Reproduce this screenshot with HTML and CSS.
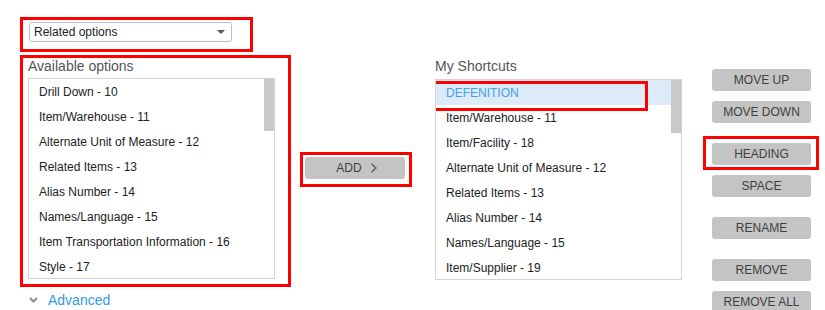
FILE: index.html
```html
<!DOCTYPE html>
<html lang="en">
    <head>
        <meta charset="UTF-8" />
        <title>Shortcuts</title>
        <link rel="stylesheet" href="styles.css">
    </head>
    <body>
        <div class="page">
            <!-- left: options -->
            <div class="col-left">
                <div class="mark mark-select">
                    <div class="select">
                        <span>Related options</span>
                        <span class="caret"></span>
                    </div>
                </div>
                <div class="mark mark-avail">
                    <div class="list-title">Available options</div>
                    <div class="listbox">
                        <ul class="items">
                            <li>Drill Down - 10</li>
                            <li>Item/Warehouse - 11</li>
                            <li>Alternate Unit of Measure - 12</li>
                            <li>Related Items - 13</li>
                            <li>Alias Number - 14</li>
                            <li>Names/Language - 15</li>
                            <li>Item Transportation Information - 16</li>
                            <li>Style - 17</li>
                        </ul>
                        <div class="track"><div class="thumb"></div></div>
                    </div>
                </div>
                <div class="advanced">
                    <svg width="9" height="6" viewBox="0 0 9 6"><path d="M1 1 L4.5 4.5 L8 1" fill="none" stroke="#8e8e8e" stroke-width="2.2"/></svg>
                    <span>Advanced</span>
                </div>
            </div>

            <!-- middle: add -->
            <div class="col-mid">
                <div class="mark mark-add">
                    <button class="btn btn-add">ADD
                        <svg width="8" height="10" viewBox="0 0 8 10"><path d="M1.5 0.8 L6 5 L1.5 9.2" fill="none" stroke="#555" stroke-width="1.3"/></svg>
                    </button>
                </div>
            </div>

            <!-- shortcuts -->
            <div class="col-short">
                <div class="list-title">My Shortcuts</div>
                <div class="listbox listbox-short">
                    <ul class="items">
                        <li class="sel">DEFENITION</li>
                        <li>Item/Warehouse - 11</li>
                        <li>Item/Facility - 18</li>
                        <li>Alternate Unit of Measure - 12</li>
                        <li>Related Items - 13</li>
                        <li>Alias Number - 14</li>
                        <li>Names/Language - 15</li>
                        <li>Item/Supplier - 19</li>
                    </ul>
                    <div class="track"><div class="thumb thumb-short"></div></div>
                    <!-- highlight on selected row -->
                    <div class="mark-row"></div>
                </div>
            </div>

            <!-- actions -->
            <div class="col-actions">
                <button class="btn act">MOVE UP</button>
                <button class="btn act act-down">MOVE DOWN</button>
                <div class="mark mark-heading">
                    <button class="btn act">HEADING</button>
                </div>
                <button class="btn act act-space">SPACE</button>
                <button class="btn act act-rename">RENAME</button>
                <button class="btn act act-remove">REMOVE</button>
                <button class="btn act act-all">REMOVE ALL</button>
            </div>
        </div>
    </body>
</html>
```

FILE: styles.css
```css
body {
    margin: 0;
    background: #fff;
    font-family: "Liberation Sans", Arial, sans-serif;
    color: #333;
    overflow: hidden;
}
.page {
    display: flex;
    align-items: flex-start;
    padding: 17px 0 0 20px;
}
/* red annotation boxes */
.mark {
    border: 3px solid #f00;
    box-sizing: border-box;
}
.col-left {
    width: 271px;
}
.mark-select {
    width: 233px;
    height: 35px;
    padding: 2px 0 0 6px;
}
.select {
    width: 203px;
    height: 20px;
    box-sizing: border-box;
    border: 1px solid #bdbdbd;
    border-radius: 3px;
    display: flex;
    align-items: center;
    justify-content: space-between;
    padding: 0 6px 0 4px;
    font-size: 12px;
    color: #222;
}
.caret {
    width: 0;
    height: 0;
    border-left: 4px solid transparent;
    border-right: 4px solid transparent;
    border-top: 4px solid #555;
}
.mark-avail {
    margin-top: 3px;
    width: 271px;
    height: 232px;
    padding: 0 0 0 5px;
}
.list-title {
    font-size: 14px;
    line-height: 16px;
    color: #555;
}
.listbox {
    position: relative;
    display: flex;
    width: 247px;
    height: 201px;
    box-sizing: border-box;
    border: 1px solid #d3d3d3;
    margin-top: 4px;
    overflow: hidden;
}
.items {
    list-style: none;
    margin: 0;
    padding: 0;
    flex: 1;
}
.items li {
    height: 25px;
    box-sizing: border-box;
    padding: 2px 0 0 10px;
    line-height: 23px;
    font-size: 12px;
    color: #222;
    white-space: nowrap;
}
.items li.sel {
    background: #dcebf7;
    color: #45a0ea;
}
.track {
    width: 10px;
}
.thumb {
    height: 52px;
    background: #c9c9c9;
}
.thumb-short {
    height: 53px;
}
.advanced {
    display: flex;
    align-items: center;
    margin-top: 5px;
    padding-left: 9px;
    font-size: 14px;
    line-height: 16px;
    color: #3399e8;
}
.advanced svg {
    margin-right: 10px;
}
/* buttons */
.btn {
    display: block;
    border: 0;
    border-radius: 3px;
    background: #c4c4c4;
    color: #3f3f3f;
    font-family: "Liberation Sans", Arial, sans-serif;
    font-size: 12px;
    height: 22px;
    padding: 0;
}
.col-mid {
    margin: 135px 0 0 9px;
}
.mark-add {
    width: 112px;
    height: 35px;
    padding: 2px 0 0 2px;
}
.btn-add {
    width: 100px;
    display: flex;
    align-items: center;
    justify-content: center;
    gap: 8px;
    padding-left: 4px;
}
.col-short {
    margin: 41px 0 0 23px;
    width: 247px;
}
.listbox-short {
    margin-top: 5px;
}
.mark-row {
    position: absolute;
    left: -3px;
    top: 1px;
    width: 215px;
    height: 30px;
    border: 3px solid #f00;
    box-sizing: border-box;
}
.col-actions {
    margin: 52px 0 0 21px;
    width: 116px;
}
.act {
    width: 99px;
    margin-left: 9px;
}
.act-down {
    margin-top: 10px;
}
.mark-heading {
    margin-top: 13px;
    height: 34px;
    padding: 4px 0 0 6px;
}
.mark-heading .act {
    margin-left: 0;
}
.act-space {
    margin-top: 5px;
}
.act-rename,
.act-remove {
    margin-top: 20px;
}
.act-all {
    margin-top: 10px;
}
```
